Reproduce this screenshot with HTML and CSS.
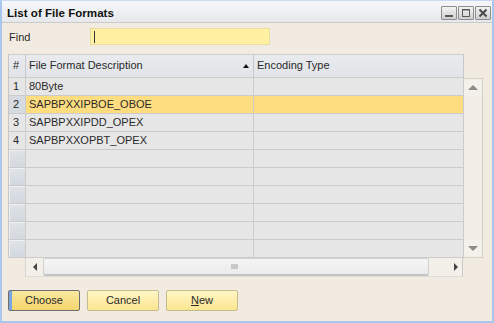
FILE: index.html
```html
<!DOCTYPE html>
<html>
<head>
<meta charset="utf-8">
<link rel="stylesheet" href="styles.css">
</head>
<body>
<div class="window">
  <div class="titlebar">
    <span class="title">List of File Formats</span>
    <div class="tbtns">
      <span class="tbtn"><svg width="14" height="12" viewBox="0 0 14 12"><rect x="3" y="8" width="8" height="2" fill="#5a5a5a"/></svg></span>
      <span class="tbtn"><svg width="14" height="12" viewBox="0 0 14 12"><rect x="3.5" y="2.5" width="7" height="7" fill="none" stroke="#5a5a5a" stroke-width="1"/><rect x="3" y="2" width="8" height="1.5" fill="#5a5a5a"/></svg></span>
      <span class="tbtn"><svg width="14" height="12" viewBox="0 0 14 12"><path d="M3.5 2.5 L10.5 9.5 M10.5 2.5 L3.5 9.5" stroke="#4a4a4a" stroke-width="2"/></svg></span>
    </div>
  </div>
  <div class="content">
    <div class="findrow">
      <label class="findlabel">Find</label>
      <div class="findinput"><span class="caret"></span></div>
    </div>
    <div class="tablewrap">
      <div class="gridcol">
        <div class="grid">
          <div class="hcell hnum">#</div>
          <div class="hcell">File Format Description<span class="sort"></span></div>
          <div class="hcell">Encoding Type</div>

          <div class="num">1</div><div class="cell">80Byte</div><div class="cell"></div>
          <div class="num sel-num">2</div><div class="cell sel">SAPBPXXIPBOE_OBOE</div><div class="cell sel"></div>
          <div class="num">3</div><div class="cell">SAPBPXXIPDD_OPEX</div><div class="cell"></div>
          <div class="num">4</div><div class="cell">SAPBPXXOPBT_OPEX</div><div class="cell"></div>
          <div class="num empty"></div><div class="cell"></div><div class="cell"></div>
          <div class="num empty"></div><div class="cell"></div><div class="cell"></div>
          <div class="num empty"></div><div class="cell"></div><div class="cell"></div>
          <div class="num empty"></div><div class="cell"></div><div class="cell"></div>
          <div class="num empty"></div><div class="cell"></div><div class="cell"></div>
          <div class="num empty"></div><div class="cell"></div><div class="cell"></div>
        </div>
        <div class="hscroll">
          <div class="hbtn"><span class="arr-left"></span></div>
          <div class="hthumb"><span class="grip"></span></div>
          <div class="hgap"></div>
          <div class="hbtn hbtn-r"><span class="arr-right"></span></div>
        </div>
      </div>
      <div class="vscroll">
        <div class="vbtn"><span class="arr-up"></span></div>
        <div class="vbtn"><span class="arr-down"></span></div>
      </div>
    </div>
    <div class="buttons">
      <button class="btn btn-default">Choose</button>
      <button class="btn">Cancel</button>
      <button class="btn"><u>N</u>ew</button>
    </div>
  </div>
</div>
</body>
</html>
```
FILE: styles.css
```css
html, body {
  margin: 0;
  padding: 0;
  background: #f2ebe2;
}
body {
  font-family: "Liberation Sans", Arial, sans-serif;
  font-size: 11px;
  color: #2a2a2a;
}
.window {
  width: 494px;
  height: 323px;
  box-sizing: border-box;
  border: 2px solid #a9c6ef;
  border-top: 1px solid #c9daf2;
  background: #f2ebe2;
  display: flex;
  flex-direction: column;
}
.titlebar {
  height: 21px;
  border-bottom: 1px solid #cacaca;
  background: linear-gradient(#f6f7f9, #e6e8eb);
  display: flex;
  align-items: center;
  padding-left: 5px;
  padding-right: 1px;
}
.title {
  font-weight: bold;
  font-size: 11.6px;
  color: #111;
  padding-top: 2px;
  flex: 1;
}
.tbtns {
  display: flex;
  gap: 1px;
  padding-top: 2px;
}
.tbtn {
  width: 14px;
  height: 12px;
  border: 1px solid #8e8e8e;
  border-radius: 1px;
  background: linear-gradient(#f3f3f3, #cfcfcf);
  display: flex;
}
.content {
  padding: 0 6px;
  display: flex;
  flex-direction: column;
}
.findrow {
  margin-top: 5px;
  display: flex;
  height: 17px;
  align-items: center;
}
.findlabel {
  width: 81px;
  padding-left: 1px;
}
.findinput {
  width: 175px;
  height: 15px;
  background: #fff0a2;
  border: 1px solid #e8dca0;
  display: flex;
  align-items: center;
  padding-left: 3px;
}
.caret {
  width: 1px;
  height: 12px;
  background: #333;
}
.tablewrap {
  margin-top: 9px;
  display: flex;
}
.gridcol {
  display: flex;
  flex-direction: column;
}
.grid {
  display: grid;
  grid-template-columns: 17px 228px 210px;
  grid-auto-rows: 18px;
  grid-template-rows: 24px;
  border-left: 1px solid #c6c6c6;
  width: 455px;
}
.hcell {
  box-sizing: border-box;
  background: linear-gradient(#e9ebee, #e1e4e8);
  border-top: 1px solid #cdcdcd;
  border-bottom: 1px solid #cdcdcd;
  border-right: 1px solid #c8c8c8;
  display: flex;
  align-items: center;
  padding-left: 3px;
  padding-bottom: 2px;
  position: relative;
}
.hnum {
  padding-left: 4px;
}
.sort {
  position: absolute;
  right: 4px;
  top: 9px;
  width: 0;
  height: 0;
  border-left: 3px solid transparent;
  border-right: 3px solid transparent;
  border-bottom: 4px solid #111;
}
.num, .cell {
  box-sizing: border-box;
  border-right: 1px solid #cbcbcb;
  border-bottom: 1px solid #cbcbcb;
  background: #e6e6e6;
  display: flex;
  align-items: center;
  padding-left: 3px;
  padding-bottom: 1px;
  white-space: nowrap;
}
.num {
  padding-left: 4px;
}
.sel {
  background: #fedc80;
}
.sel-num {
  background: #d5dbe1;
}
.empty {
  background: linear-gradient(#dfe3e8, #d2d8de);
  box-shadow: inset 1px 1px 0 #eef0f3;
}
.hscroll {
  margin-left: 17px;
  width: 438px;
  height: 19px;
  box-sizing: border-box;
  border-left: 1px solid #d4d4d4;
  border-right: 1px solid #c8c8c8;
  border-bottom: 1px solid #dcdcdc;
  display: flex;
  background: #f3efe9;
}
.hbtn {
  width: 17px;
  display: flex;
  align-items: center;
  justify-content: center;
}
.hbtn-r {
  width: 13px;
}
.arr-left {
  width: 0; height: 0;
  border-top: 4px solid transparent;
  border-bottom: 4px solid transparent;
  border-right: 4px solid #444;
}
.arr-right {
  width: 0; height: 0;
  border-top: 4px solid transparent;
  border-bottom: 4px solid transparent;
  border-left: 4px solid #444;
}
.hthumb {
  width: 386px;
  box-sizing: border-box;
  background: linear-gradient(#f4f4f4, #ececec);
  border: 1px solid #d2d2d2;
  border-bottom: 2px solid #c4c4c4;
  border-radius: 2px;
  display: flex;
  align-items: center;
  justify-content: center;
}
.grip {
  width: 7px;
  height: 5px;
  background-image: radial-gradient(circle, #9a9a9a 0.6px, transparent 0.8px);
  background-size: 2px 2px;
  margin-left: -3px;
}
.hgap {
  width: 20px;
}
.vscroll {
  margin-top: 24px;
  width: 19px;
  height: 180px;
  box-sizing: border-box;
  border: 1px solid #d4d0ca;
  border-left: none;
  background: #f2ede6;
  display: flex;
  flex-direction: column;
  justify-content: space-between;
}
.vbtn {
  height: 17px;
  display: flex;
  align-items: center;
  justify-content: center;
  background: #f4f0ea;
}
.arr-up {
  width: 0; height: 0;
  border-left: 5px solid transparent;
  border-right: 5px solid transparent;
  border-bottom: 5px solid #8a8a8a;
}
.arr-down {
  width: 0; height: 0;
  border-left: 5px solid transparent;
  border-right: 5px solid transparent;
  border-top: 5px solid #8a8a8a;
}
.buttons {
  margin-top: 13px;
  display: flex;
  gap: 7px;
}
.btn {
  width: 72px;
  height: 21px;
  box-sizing: border-box;
  font-family: "Liberation Sans", Arial, sans-serif;
  font-size: 11px;
  color: #2a2a2a;
  border: 1px solid #c6bb8e;
  border-radius: 2px;
  background: linear-gradient(#fff6c6, #fbe590);
  padding: 0 0 1px 0;
}
.btn-default {
  border: 1px solid #6e6e6e;
  background: linear-gradient(#fbe9a2, #f4d46c);
  box-shadow: inset 3px 0 0 #7aa6e0;
}
```
